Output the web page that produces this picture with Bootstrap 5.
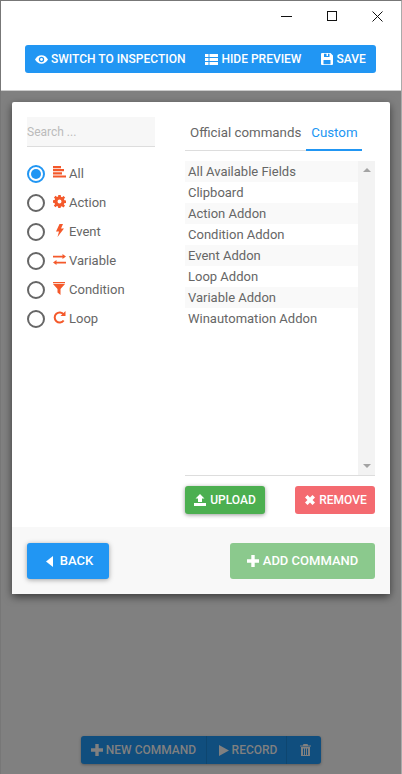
<!DOCTYPE html>
<html lang="en"><head><meta charset="utf-8"><title>Commands</title>
<link href="https://cdn.jsdelivr.net/npm/bootstrap@5.3.0/dist/css/bootstrap.min.css" rel="stylesheet">
<style>
html,body{height:100%;margin:0}
body{font-family:Roboto,"Liberation Sans",sans-serif;font-size:13px;color:#666;background:#808080;overflow:hidden}
.shell{height:774px;border-top:1px solid #777;border-left:1px solid #777;border-right:1px solid #aaa;display:flex;flex-direction:column}
.topbar{height:90px;background:#fff;border-bottom:1px solid #ccc;flex:none;padding:0 25px 0 24px}
.winctl{height:44px;justify-content:flex-end;margin-right:-24px}
.winctl span{width:45.500px;height:30px;display:flex;align-items:center;justify-content:center}
.tb{background:#2196f3;border-radius:3px;height:28px;color:#fff;font-size:12px;font-weight:500;display:flex;align-items:center;padding:0 0 0 10px;gap:20px;white-space:nowrap}
.tb span,.bt{display:inline-flex;align-items:center;gap:3px}
.stage{flex:1;background:#808080;display:flex;flex-direction:column;min-height:0;padding:11px 11px 10px 11px}
.dlg{width:378px;height:492px;background:#fff;border-radius:2px;box-shadow:0 3px 8px rgba(0,0,0,.55);flex:none;display:flex;flex-direction:column}
.dbody{height:425px;display:flex;padding:15px 15px 0 15px;flex:none}
.lft{width:128px;flex:none}
.rgt{width:190px;margin-left:30px;flex:none}
.srch{height:30px;background:#f7f7f7;border-bottom:1px solid #ddd;color:#bbb;font-size:12px;line-height:30px;margin-bottom:12px}
.opt{height:29px;display:flex;align-items:center;gap:7px;font-size:13px}
.rad{width:18px;height:18px;border:2px solid #666;border-radius:50%;flex:none;display:block}
.rad.on{border-color:#2196f3;position:relative}
.rad.on::after{content:"";position:absolute;inset:2px;background:#2196f3;border-radius:50%}
.ic{width:14px;height:14px;display:flex;align-items:center;justify-content:center;flex:none;margin-right:-4px;margin-top:-3px}
.tabsx{width:177px;height:34px;border-bottom:1px solid #ddd;display:flex;font-size:13.3px}
.tabsx span{padding:6px 5px 0 5px;line-height:20px;white-space:nowrap}
.tabsx .act{color:#2196f3;border-bottom:2px solid #2196f3;height:34px;width:56px}
.lbox{height:315px;margin-top:10px;border-bottom:1px solid #ddd;display:flex}
.itms{flex:1;list-style:none;margin:0;padding:0}
.itms li{height:21px;line-height:21px;padding-left:3px}
.itms li:nth-child(odd){background:#f9f9f9}
.sb{width:17px;background:#f3f3f3;display:flex;flex-direction:column;justify-content:space-between;align-items:center;padding:7px 0}
.arw{width:0;height:0;border-left:4px solid transparent;border-right:4px solid transparent}
.arw.u{border-bottom:4px solid #a3a3a3}.arw.d{border-top:4px solid #a3a3a3}
.acts{display:flex;justify-content:space-between;margin-top:10px}
.bt{height:28px;border-radius:3px;color:#fff;font-size:12px;font-weight:500;justify-content:center}
.up{width:80px;background:#4caf50;box-shadow:0 1px 4px rgba(0,0,0,.4);gap:4px}
.rm{width:80px;background:#f46a70;gap:4px;padding-left:2px}
.dfoot{flex:1;background:#f8f8f8;display:flex;justify-content:space-between;align-items:flex-start;padding:16px 15px 0 15px}
.bk{width:82px;height:36px;background:#2196f3;font-size:13px;font-weight:500;color:#fff;border-radius:3px;box-shadow:0 1px 5px rgba(0,0,0,.35);display:flex;align-items:center;justify-content:center;gap:7px;padding-left:3px}
.ad{width:145px;height:36px;background:#8bc98d;font-size:13px;font-weight:500;color:#fff;border-radius:3px;display:flex;align-items:center;justify-content:center;gap:4px}
.dockx{margin:auto 0 0 69px;width:240px;height:28px;background:#104e7e;border-radius:3px;color:#808080;font-size:12px;font-weight:500;display:flex;box-shadow:0 1px 3px rgba(0,0,0,.3)}
.dockx span{display:flex;align-items:center;justify-content:center;gap:3px;border-right:1px solid #0e4670}
.dockx span:last-child{border:0}
.d1{width:126px}.d2{width:80px;padding-left:3px}.d3{width:34px;padding-left:2px}
</style></head><body>
<div class="shell">
<header class="topbar">
<div class="d-flex winctl">
<span><svg width="11" height="11"><path d="M0 5.500h11" stroke="#111"/></svg></span>
<span><svg width="10" height="10"><rect x=".5" y=".5" width="9" height="9" fill="none" stroke="#111"/></svg></span>
<span><svg width="11" height="11"><path d="M.5.5l10 10M10.500.5l-10 10" stroke="#111"/></svg></span>
</div>
<div class="tb">
<span><svg width="13" height="11" viewBox="0 0 14 11"><path fill="#fff" fill-rule="evenodd" d="M7 1C4 1 1.600 2.700 0 5.500 1.600 8.300 4 10 7 10s5.400-1.700 7-4.500C12.400 2.700 10 1 7 1zM7 2.600a2.900 2.900 0 1 0 0 5.800 2.900 2.900 0 0 0 0-5.800z"/><circle cx="7" cy="5.500" r="1.500" fill="#fff"/></svg>SWITCH TO INSPECTION</span>
<span><svg width="13" height="11" viewBox="0 0 13 11"><path fill="#fff" d="M0 0h3.500v3H0zM4.500 0H13v3H4.500zM0 4h3.500v3H0zM4.500 4H13v3H4.500zM0 8h3.500v3H0zM4.500 8H13v3H4.500z"/></svg>HIDE PREVIEW</span>
<span><svg width="12" height="12" viewBox="0 0 12 12"><path fill="#fff" fill-rule="evenodd" d="M0 1q0-1 1-1h8.500L12 2.500V11q0 1-1 1H1q-1 0-1-1zM3 .8V4h5.500V.8H7V3H5.500V.8zM2.500 7v4.200h7V7z"/></svg>SAVE</span>
</div>
</header>
<main class="stage">
<section class="dlg">
<div class="dbody">
<div class="lft">
<div class="srch">Search ...</div>
<div class="opt"><i class="rad on"></i><b class="ic"><svg width="13" height="12" viewBox="0 0 13 12"><path fill="#f4592b" d="M0 0h8v2.200H0zM0 3h11v2.200H0zM0 6.200h9v2.200H0zM0 9.400h13v2.200H0z"/></svg></b><span>All</span></div>
<div class="opt"><i class="rad"></i><b class="ic"><svg width="13" height="13" viewBox="0 0 13 13"><path fill="#f4592b" fill-rule="evenodd" d="M5.300 0h2.400l.3 1.800 1.100.5L10.600 1l1.600 1.700-1.300 1.400.5 1.100 1.600.3v2.400l-1.800.3-.4 1.100 1.200 1.500-1.700 1.600-1.400-1.200-1.100.5-.3 1.800H5.300L5 11.600l-1.100-.5L2.400 12.300.8 10.600 2 9.200 1.500 8 0 7.700V5.300l1.600-.3.500-1.100L1 2.500 2.600.8 4 2l1.100-.4zM6.500 4.500a2 2 0 1 0 0 4 2 2 0 0 0 0-4z"/></svg></b><span>Action</span></div>
<div class="opt"><i class="rad"></i><b class="ic"><svg width="9" height="13" viewBox="0 0 9 13"><path fill="#f4592b" d="M4.500 0h3.500L6 4.500h3L2.500 13 4 7.500H1z"/></svg></b><span>Event</span></div>
<div class="opt"><i class="rad"></i><b class="ic"><svg width="13" height="11" viewBox="0 0 13 11"><path fill="#f4592b" d="M9.500 0L13 2.500 9.500 5V3.500H0V1.700h9.500zM3.500 6v1.700H13v1.800H3.500V11L0 8.500z"/></svg></b><span>Variable</span></div>
<div class="opt"><i class="rad"></i><b class="ic"><svg width="12" height="13" viewBox="0 0 12 13"><path fill="#f4592b" d="M0 0h12v1.200H0zM0 2h12L7.500 7v6l-3-2.500V7z"/></svg></b><span>Condition</span></div>
<div class="opt"><i class="rad"></i><b class="ic"><svg width="13" height="13" viewBox="0 0 13 13"><path fill="none" stroke="#f4592b" stroke-width="2" d="M10.700 9.500a5 5 0 1 1 0-6"/><path fill="#f4592b" d="M12.500 0v5h-5z"/></svg></b><span>Loop</span></div>
</div>
<div class="rgt">
<div class="tabsx"><span>Official commands</span><span class="act">Custom</span></div>
<div class="lbox">
<ul class="itms"><li>All Available Fields</li><li>Clipboard</li><li>Action Addon</li><li>Condition Addon</li><li>Event Addon</li><li>Loop Addon</li><li>Variable Addon</li><li>Winautomation Addon</li></ul>
<div class="sb"><i class="arw u"></i><i class="arw d"></i></div>
</div>
<div class="acts">
<div class="bt up"><svg width="12" height="12" viewBox="0 0 12 12"><path fill="#fff" d="M6 0l4.500 4.500H8V8H4V4.500H1.500zM0 9h12v3H0z"/></svg>UPLOAD</div>
<div class="bt rm"><svg width="10" height="10" viewBox="0 0 10 10"><path fill="#fff" d="M2.500 0L5 2.500 7.500 0 10 2.500 7.500 5 10 7.500 7.500 10 5 7.500 2.500 10 0 7.500 2.500 5 0 2.500z"/></svg>REMOVE</div>
</div>
</div>
</div>
<div class="dfoot">
<div class="bk"><svg width="7" height="11" viewBox="0 0 7 11"><path fill="#fff" d="M7 0v11L0 5.500z"/></svg>BACK</div>
<div class="ad"><svg width="12" height="12" viewBox="0 0 12 12"><path fill="#fff" d="M4.300 0h3.400v4.300H12v3.400H7.700V12H4.300V7.700H0V4.300h4.300z"/></svg>ADD COMMAND</div>
</div>
</section>
<div class="dockx">
<span class="d1"><svg width="12" height="12" viewBox="0 0 12 12"><path fill="#808080" d="M4.300 0h3.400v4.300H12v3.400H7.700V12H4.300V7.700H0V4.300h4.300z"/></svg>NEW COMMAND</span>
<span class="d2"><svg width="10" height="11" viewBox="0 0 10 11"><path fill="#808080" d="M0 0l10 5.500L0 11z"/></svg>RECORD</span>
<span class="d3"><svg width="11" height="12" viewBox="0 0 11 12"><path fill="#808080" fill-rule="evenodd" d="M3.500 0h4l.7 1.500H11v1H0v-1h2.800zM1 3h9v9H1zM3 4.500V11h1V4.500zM5 4.500V11h1V4.500zM7 4.500V11h1V4.500z"/></svg></span>
</div>
</main>
</div>
</body></html>
